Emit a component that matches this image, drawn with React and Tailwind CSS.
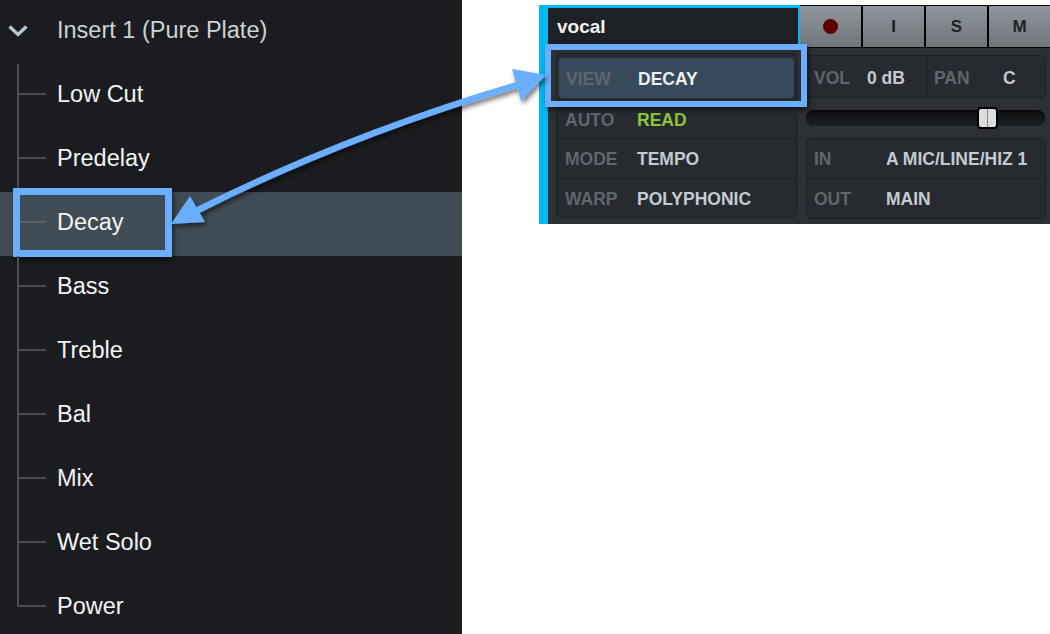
import React from 'react';

const PARAMS = ['Low Cut', 'Predelay', 'Decay', 'Bass', 'Treble', 'Bal', 'Mix', 'Wet Solo', 'Power'];

const LEFT_ROWS = [
  { label: 'VIEW', value: 'DECAY', active: true },
  { label: 'AUTO', value: 'READ', green: true },
  { label: 'MODE', value: 'TEMPO' },
  { label: 'WARP', value: 'POLYPHONIC' },
];

function Chevron() {
  return (
    <svg width="22" height="14" viewBox="0 0 22 14">
      <polyline points="2.5,2.5 11,10.5 19.5,2.5" fill="none" stroke="#b7c7d0" strokeWidth="3.4" />
    </svg>
  );
}

function TreeRow({ name, last, selected }) {
  return (
    <div className={`relative shrink-0 h-[64px] flex items-center pl-[57px] pb-[3px] ${selected ? 'bg-[#404c55]' : ''}`}>
      {/* tree guides */}
      <span className={`absolute left-[17px] top-0 w-[2px] bg-[#4b4c4f] ${last ? 'h-[31px]' : 'h-full'}`} />
      <span className={`absolute left-[19px] top-[29px] w-[27px] h-[2px] ${selected ? 'bg-[#5a6168]' : 'bg-[#4b4c4f]'}`} />
      <span className="text-[23.5px] text-[#f3f3f3] leading-none">{name}</span>
      {selected && (
        <div className="absolute left-[13px] top-[-4px] w-[159px] h-[69px] border-[7px] border-[#6aaefc] shadow-[2px_3px_5px_rgba(0,0,0,0.55)]" />
      )}
    </div>
  );
}

function Arrow() {
  return (
    <svg className="absolute left-0 top-0 pointer-events-none" width="1050" height="634" viewBox="0 0 1050 634">
      <defs>
        <filter id="sh" x="-20%" y="-20%" width="140%" height="140%">
          <feDropShadow dx="2" dy="3" stdDeviation="2.5" floodColor="#000" floodOpacity="0.55" />
        </filter>
      </defs>
      <g filter="url(#sh)" fill="#6aaefc">
        <path d="M196 211 Q347 135 517 85" fill="none" stroke="#6aaefc" strokeWidth="6.5" />
        <polygon points="171,224 190,196 205,222" />
        <polygon points="546,75 512,69 521,101" />
      </g>
    </svg>
  );
}

export default function App() {
  return (
    <div className="relative w-[1050px] h-[634px] flex bg-white overflow-hidden font-['Liberation_Sans',Arial,sans-serif]">
      {/* plugin parameter tree */}
      <div className="w-[462px] h-full bg-[#1b1c1f] flex flex-col overflow-hidden">
        <div className="shrink-0 h-[64px] flex items-center pl-[7px] pb-[3px]">
          <Chevron />
          <span className="ml-[28px] text-[23.5px] text-[#cfd2d4] leading-none">Insert 1 (Pure Plate)</span>
        </div>
        {PARAMS.map((p, i) => (
          <TreeRow key={p} name={p} last={i === PARAMS.length - 1} selected={p === 'Decay'} />
        ))}
      </div>

      {/* track header */}
      <div className="relative ml-[77px] mt-[5px] w-[511px] h-[219px] flex bg-[#00b9f2]">
        <div className="w-[9px]" />
        <div className="w-[252px] flex flex-col">
          <div className="h-[40px] pt-[3px] pr-[2px]">
            <div className="h-full bg-[#1d2125] flex items-center pl-[9px] pt-[2px]">
              <span className="text-[19px] font-bold text-[#f2f2f2]">vocal</span>
            </div>
          </div>
          <div className="flex-1 bg-[#2c3034] pl-[8px] pr-[3px] pt-[8px] pb-[6px]">
            <div className="h-full rounded-[5px] bg-[#272b2f] border border-[#1d2023] flex flex-col">
              {LEFT_ROWS.map((r, i) => (
                <div key={r.label} className={`${i === 0 ? 'h-[45px] px-[2px] pt-[4px] pb-[1px]' : 'flex-1 border-t border-[#1d2023] pt-[2px]'}`}>
                  <div className={`h-full flex items-center text-[17.5px] font-bold ${r.active ? 'bg-[#364a5c] rounded-[4px] pl-[7px] pt-[2px]' : 'pl-[8px]'}`}>
                    <span className="w-[72px] text-[#5f666c]">{r.label}</span>
                    <span className={r.green ? 'text-[#8dc63f]' : r.active ? 'text-[#eef2f5]' : 'text-[#c4cbd2]'}>{r.value}</span>
                  </div>
                </div>
              ))}
            </div>
          </div>
        </div>

        <div className="w-[250px] flex flex-col bg-[#2c3034]">
          <div className="h-[43px] flex gap-[2px] bg-black pt-[1px] pb-[1px]">
            <div className="flex-1 bg-linear-to-b from-[#90969c] to-[#6f757b] flex items-center justify-center">
              <span className="w-[15px] h-[15px] rounded-full bg-[#5e0000]" />
            </div>
            {['I', 'S', 'M'].map(l => (
              <div key={l} className="flex-1 bg-linear-to-b from-[#90969c] to-[#6f757b] flex items-center justify-center text-[17px] font-bold text-[#1e2022]">
                {l}
              </div>
            ))}
          </div>
          <div className="flex-1 pl-[6px] pr-[4px] pt-[7px] pb-[5px] flex flex-col">
            <div className="h-[43px] flex rounded-[5px] bg-[#272b2f] border border-[#1d2023] text-[17.5px] font-bold pt-[3px]">
              <div className="w-[121px] flex items-center pl-[7px] border-r border-[#1d2023]">
                <span className="w-[53px] text-[#5f666c]">VOL</span>
                <span className="text-[#c4cbd2]">0 dB</span>
              </div>
              <div className="flex-1 flex items-center pl-[6px]">
                <span className="w-[69px] text-[#5f666c]">PAN</span>
                <span className="text-[#c4cbd2]">C</span>
              </div>
            </div>
            <div className="h-[40px] pt-[12px] pr-[1px]">
              <div className="relative h-[16px] rounded-full bg-linear-to-b from-[#0e1012] to-[#1c2023] shadow-[inset_0_1px_2px_rgba(0,0,0,0.8)]">
                <div className="absolute left-[171px] top-[-3px] w-[21px] h-[22px] rounded-[4px] border-2 border-black bg-[#dcdcdc] flex justify-center">
                  <span className="w-[1px] h-full bg-[#8a8a8a]" />
                </div>
              </div>
            </div>
            <div className="flex-1 rounded-[5px] bg-[#272b2f] border border-[#1d2023] flex flex-col text-[17.5px] font-bold">
              <div className="flex-1 flex items-center pl-[7px] pt-[2px]">
                <span className="w-[72px] text-[#5f666c]">IN</span>
                <span className="text-[#c4cbd2]">A MIC/LINE/HIZ 1</span>
              </div>
              <div className="flex-1 flex items-center pl-[7px] pt-[2px] border-t border-[#1d2023]">
                <span className="w-[72px] text-[#5f666c]">OUT</span>
                <span className="text-[#c4cbd2]">MAIN</span>
              </div>
            </div>
          </div>
        </div>

        {/* highlight around VIEW row */}
        <div className="absolute left-[6px] top-[39px] w-[262px] h-[63px] border-[6px] border-[#6aaefc] shadow-[2px_3px_5px_rgba(0,0,0,0.55)]" />
      </div>

      <Arrow />
    </div>
  );
}
